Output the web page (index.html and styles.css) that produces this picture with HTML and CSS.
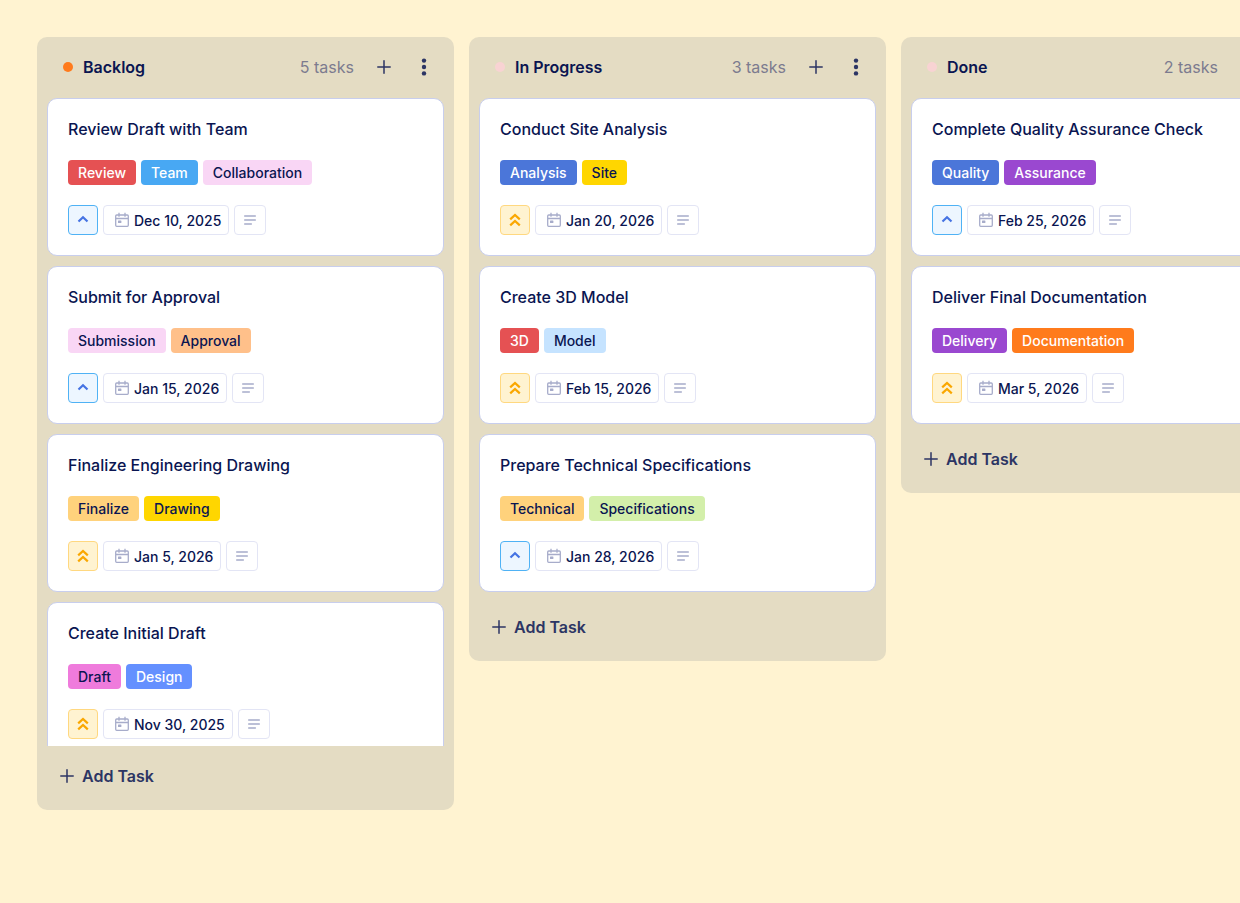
FILE: index.html
```html
<!DOCTYPE html>
<html lang="en">
<head>
  <meta charset="UTF-8">
  <meta name="viewport" content="width=device-width, initial-scale=1.0">
  <title>Task Board</title>
  <link rel="stylesheet" href="styles.css">
</head>
<body>
  <!-- Shared icons -->
  <svg class="sprite" aria-hidden="true">
    <symbol id="plus" viewBox="0 0 14 14">
      <path d="M7 .8v12.400M.8 7h12.400" fill="none" stroke="currentColor" stroke-width="1.500" stroke-linecap="round"/>
    </symbol>
    <symbol id="dots" viewBox="0 0 6 18">
      <circle cx="3" cy="2.600" r="2.200"/><circle cx="3" cy="9" r="2.200"/><circle cx="3" cy="15.400" r="2.200"/>
    </symbol>
    <symbol id="high" viewBox="0 0 14 14">
      <path d="M2.500 8.500L7 4.300l4.500 4.200" fill="none" stroke="currentColor" stroke-width="2.200"/>
    </symbol>
    <symbol id="highest" viewBox="0 0 14 14">
      <path d="M2.200 6.400L7 1.900l4.800 4.500M2.200 12.400L7 7.900l4.800 4.500" fill="none" stroke="currentColor" stroke-width="2.200"/>
    </symbol>
    <symbol id="calendar" viewBox="0 0 14 16">
      <path d="M1.700 3h10.600q1 0 1 1v9.300q0 1-1 1H1.700q-1 0-1-1V4q0-1 1-1zM.7 6.500h12.600M4 .8v4M10 .8v4" fill="none" stroke="currentColor" stroke-width="1.300"/>
      <rect x="3" y="8.500" width="3.400" height="2.600" rx=".5" fill="currentColor"/>
    </symbol>
    <symbol id="lines" viewBox="0 0 12 10">
      <path d="M.6 1h10.800M.6 5h10.800M.6 9h6.800" fill="none" stroke="currentColor" stroke-width="1.300" stroke-linecap="round"/>
    </symbol>
  </svg>

  <main class="board">
    <section class="column">
      <header class="column-header">
        <span class="dot orange"></span>
        <h2>Backlog</h2>
        <span class="count">5 tasks</span>
        <button class="icon-btn" aria-label="Add task"><svg class="icon-plus"><use href="#plus"/></svg></button>
        <button class="icon-btn" aria-label="Column menu"><svg class="icon-dots"><use href="#dots"/></svg></button>
      </header>
      <div class="cards">
        <article class="card">
          <h3>Review Draft with Team</h3>
          <div class="tags"><span class="tag red">Review</span><span class="tag sky">Team</span><span class="tag pink">Collaboration</span></div>
          <div class="meta">
            <span class="priority high"><svg><use href="#high"/></svg></span>
            <span class="date"><svg><use href="#calendar"/></svg>Dec 10, 2025</span>
            <span class="desc"><svg><use href="#lines"/></svg></span>
          </div>
        </article>
        <article class="card">
          <h3>Submit for Approval</h3>
          <div class="tags"><span class="tag pink">Submission</span><span class="tag peach">Approval</span></div>
          <div class="meta">
            <span class="priority high"><svg><use href="#high"/></svg></span>
            <span class="date"><svg><use href="#calendar"/></svg>Jan 15, 2026</span>
            <span class="desc"><svg><use href="#lines"/></svg></span>
          </div>
        </article>
        <article class="card">
          <h3>Finalize Engineering Drawing</h3>
          <div class="tags"><span class="tag sand">Finalize</span><span class="tag yellow">Drawing</span></div>
          <div class="meta">
            <span class="priority highest"><svg><use href="#highest"/></svg></span>
            <span class="date"><svg><use href="#calendar"/></svg>Jan 5, 2026</span>
            <span class="desc"><svg><use href="#lines"/></svg></span>
          </div>
        </article>
        <article class="card">
          <h3>Create Initial Draft</h3>
          <div class="tags"><span class="tag magenta">Draft</span><span class="tag cornflower">Design</span></div>
          <div class="meta">
            <span class="priority highest"><svg><use href="#highest"/></svg></span>
            <span class="date"><svg><use href="#calendar"/></svg>Nov 30, 2025</span>
            <span class="desc"><svg><use href="#lines"/></svg></span>
          </div>
        </article>
      </div>
      <button class="add-task"><svg class="icon-plus"><use href="#plus"/></svg>Add Task</button>
    </section>

    <section class="column">
      <header class="column-header">
        <span class="dot rose"></span>
        <h2>In Progress</h2>
        <span class="count">3 tasks</span>
        <button class="icon-btn" aria-label="Add task"><svg class="icon-plus"><use href="#plus"/></svg></button>
        <button class="icon-btn" aria-label="Column menu"><svg class="icon-dots"><use href="#dots"/></svg></button>
      </header>
      <div class="cards">
        <article class="card">
          <h3>Conduct Site Analysis</h3>
          <div class="tags"><span class="tag blue">Analysis</span><span class="tag yellow">Site</span></div>
          <div class="meta">
            <span class="priority highest"><svg><use href="#highest"/></svg></span>
            <span class="date"><svg><use href="#calendar"/></svg>Jan 20, 2026</span>
            <span class="desc"><svg><use href="#lines"/></svg></span>
          </div>
        </article>
        <article class="card">
          <h3>Create 3D Model</h3>
          <div class="tags"><span class="tag red">3D</span><span class="tag ice">Model</span></div>
          <div class="meta">
            <span class="priority highest"><svg><use href="#highest"/></svg></span>
            <span class="date"><svg><use href="#calendar"/></svg>Feb 15, 2026</span>
            <span class="desc"><svg><use href="#lines"/></svg></span>
          </div>
        </article>
        <article class="card">
          <h3>Prepare Technical Specifications</h3>
          <div class="tags"><span class="tag sand">Technical</span><span class="tag green">Specifications</span></div>
          <div class="meta">
            <span class="priority high"><svg><use href="#high"/></svg></span>
            <span class="date"><svg><use href="#calendar"/></svg>Jan 28, 2026</span>
            <span class="desc"><svg><use href="#lines"/></svg></span>
          </div>
        </article>
      </div>
      <button class="add-task"><svg class="icon-plus"><use href="#plus"/></svg>Add Task</button>
    </section>

    <section class="column">
      <header class="column-header">
        <span class="dot rose"></span>
        <h2>Done</h2>
        <span class="count">2 tasks</span>
        <button class="icon-btn" aria-label="Add task"><svg class="icon-plus"><use href="#plus"/></svg></button>
        <button class="icon-btn" aria-label="Column menu"><svg class="icon-dots"><use href="#dots"/></svg></button>
      </header>
      <div class="cards">
        <article class="card">
          <h3>Complete Quality Assurance Check</h3>
          <div class="tags"><span class="tag blue">Quality</span><span class="tag purple">Assurance</span></div>
          <div class="meta">
            <span class="priority high"><svg><use href="#high"/></svg></span>
            <span class="date"><svg><use href="#calendar"/></svg>Feb 25, 2026</span>
            <span class="desc"><svg><use href="#lines"/></svg></span>
          </div>
        </article>
        <article class="card">
          <h3>Deliver Final Documentation</h3>
          <div class="tags"><span class="tag purple">Delivery</span><span class="tag orange">Documentation</span></div>
          <div class="meta">
            <span class="priority highest"><svg><use href="#highest"/></svg></span>
            <span class="date"><svg><use href="#calendar"/></svg>Mar 5, 2026</span>
            <span class="desc"><svg><use href="#lines"/></svg></span>
          </div>
        </article>
      </div>
      <button class="add-task"><svg class="icon-plus"><use href="#plus"/></svg>Add Task</button>
    </section>
  </main>
</body>
</html>
```
FILE: styles.css
```css
* {
  box-sizing: border-box;
}

body {
  margin: 0;
  font-family: Inter, "Liberation Sans", sans-serif;
  background: #fff3d1;
  color: #0a1551;
}

h2, h3 {
  margin: 0;
}

button {
  padding: 0;
  border: none;
  background: none;
  font-family: inherit;
  color: #2c3564;
  cursor: pointer;
}

svg {
  display: block;
  flex: none;
}

.sprite {
  display: none;
}

.board {
  display: flex;
  align-items: flex-start;
  gap: 15px;
  min-height: 100vh;
  padding: 37px;
  overflow-x: auto;
  scrollbar-width: none;
}

.column {
  display: flex;
  flex-direction: column;
  flex: none;
  width: 417px;
  max-height: calc(100vh - 130px);
  background: #e4dcc3;
  border-radius: 10px;
}

/* Column header */
.column-header {
  display: flex;
  align-items: center;
  flex: none;
  padding: 20px 20px 21px 26px;
}

.column-header h2 {
  flex: 1;
  font-size: 16px;
  font-weight: 600;
  line-height: 20px;
}

.dot {
  width: 10px;
  height: 10px;
  margin-right: 10px;
  border-radius: 50%;
}

.dot.orange {
  background: #ff7b1c;
}

.dot.rose {
  background: #f8d3d3;
}

.count {
  margin-right: 20px;
  font-size: 16px;
  line-height: 20px;
  color: #7c7b8f;
}

.icon-btn {
  display: flex;
  align-items: center;
  justify-content: center;
  width: 20px;
  height: 20px;
}

.icon-btn + .icon-btn {
  margin-left: 20px;
}

.icon-plus {
  width: 14px;
  height: 14px;
}

.icon-dots {
  width: 6px;
  height: 18px;
  fill: currentColor;
}

/* Cards */
.cards {
  display: flex;
  flex-direction: column;
  gap: 10px;
  min-height: 0;
  padding: 0 10px;
  overflow-y: auto;
  scrollbar-width: none;
}

.card {
  flex: none;
  padding: 20px;
  background: #fff;
  border: 1px solid #c8ceed;
  border-radius: 10px;
}

.card h3 {
  margin-bottom: 20px;
  font-size: 16px;
  font-weight: 500;
  line-height: 21px;
}

.tags {
  display: flex;
  gap: 5px;
  margin-bottom: 20px;
}

.tag {
  padding: 0 10px;
  border-radius: 4px;
  font-size: 14px;
  font-weight: 500;
  line-height: 25px;
}

.tag.red { background: #e55153; color: #fff; }
.tag.sky { background: #48a8f3; color: #fff; }
.tag.pink { background: #f9d6f5; }
.tag.peach { background: #ffc08a; }
.tag.sand { background: #ffd27c; }
.tag.yellow { background: #ffd600; }
.tag.magenta { background: #ef7bdc; }
.tag.cornflower { background: #6490ff; color: #fff; }
.tag.blue { background: #4b76d9; color: #fff; }
.tag.ice { background: #c5e3ff; }
.tag.green { background: #d3efaa; }
.tag.purple { background: #9a48d0; color: #fff; }
.tag.orange { background: #ff7b1c; color: #fff; }

.meta {
  display: flex;
  gap: 5px;
}

.priority, .date, .desc {
  display: flex;
  align-items: center;
  justify-content: center;
  height: 30px;
  border: 1px solid #e3e5f5;
  border-radius: 4px;
}

.priority {
  width: 30px;
}

.priority svg {
  width: 14px;
  height: 14px;
}

.priority.high {
  background: #edf6ff;
  border-color: #4fb2f5;
  color: #4573e3;
}

.priority.highest {
  background: #fff3d1;
  border-color: #ffd880;
  color: #faa700;
}

.date {
  gap: 5px;
  padding: 0 7px 0 11px;
  font-size: 14px;
  font-weight: 500;
}

.date svg {
  width: 14px;
  height: 16px;
  color: #a7acca;
}

.desc {
  width: 32px;
}

.desc svg {
  width: 12px;
  height: 10px;
  color: #a7acca;
}

.add-task {
  display: flex;
  align-items: center;
  align-self: flex-start;
  flex: none;
  gap: 8px;
  height: 20px;
  margin: 20px 23px 24px;
  font-size: 16px;
  font-weight: 600;
}

.column:not(:first-child) .cards {
  padding-bottom: 5px;
}
```
